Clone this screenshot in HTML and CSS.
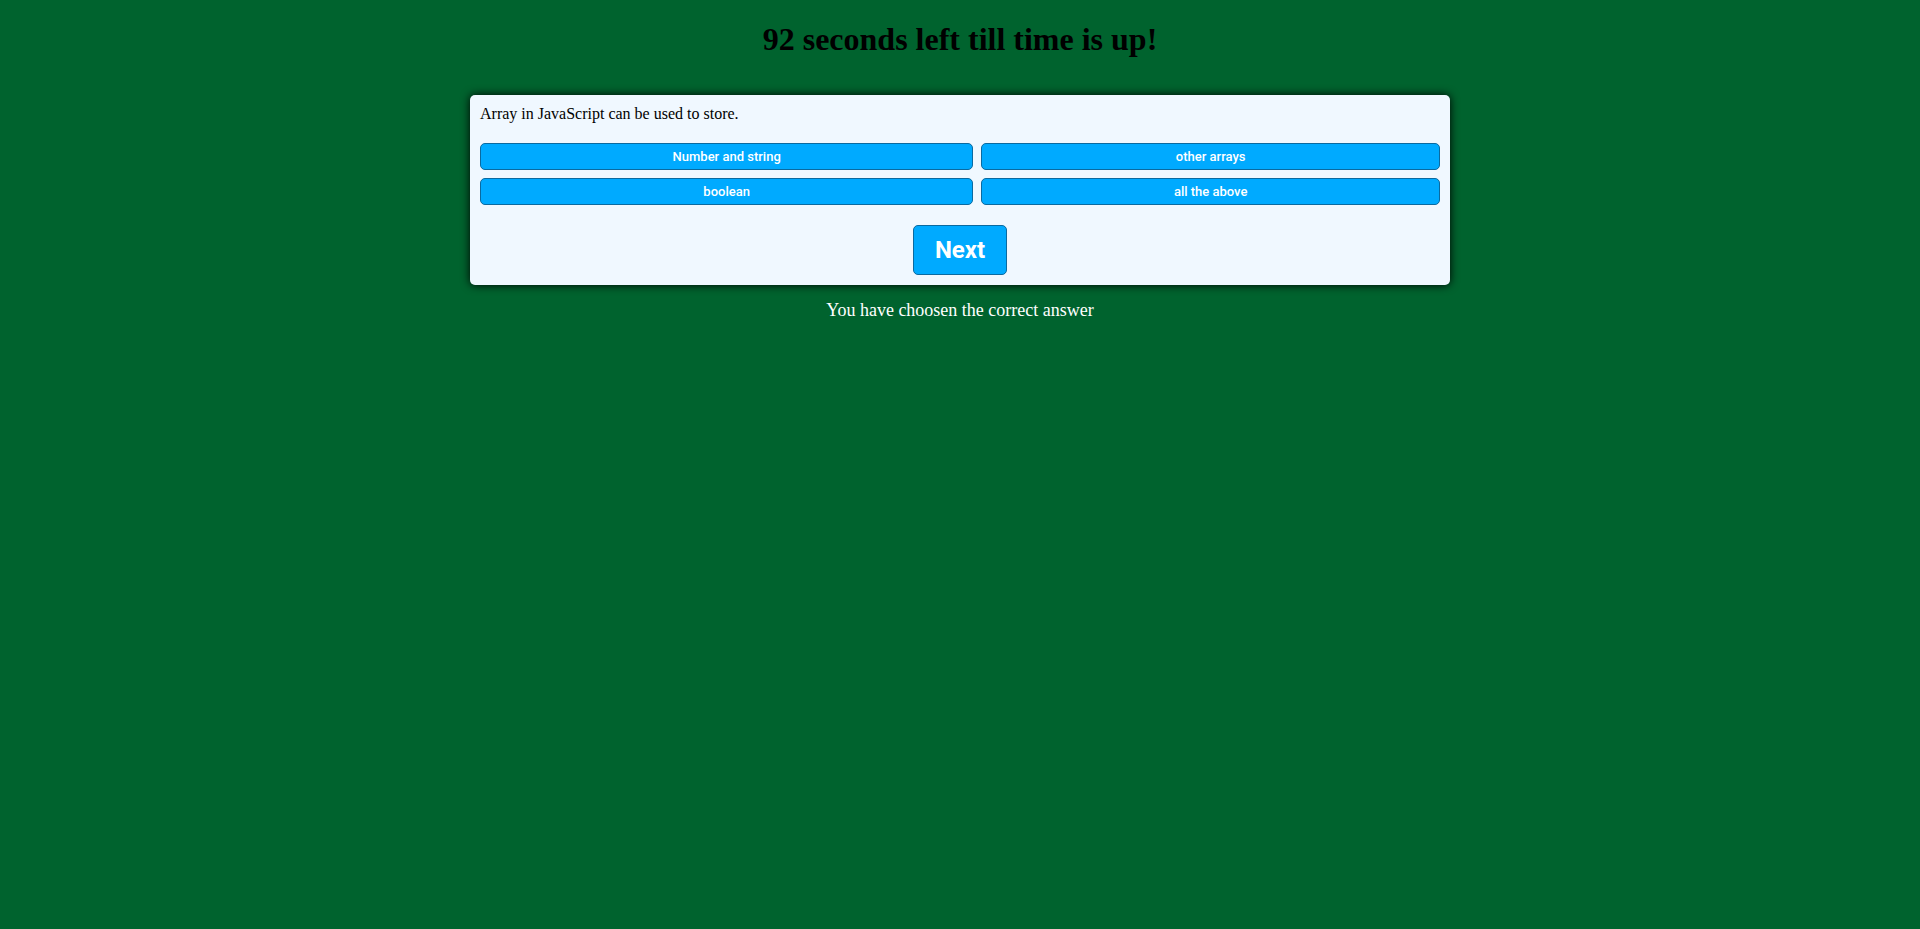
FILE: index.html
```html
<!DOCTYPE html>
<html lang="en">
<head>
<meta charset="utf-8">
<title>Quiz</title>
<link rel="stylesheet" href="styles.css">
</head>
<body>
<h1 class="timer">92 seconds left till time is up!</h1>
<div class="card">
  <p class="question">Array in JavaScript can be used to store.</p>
  <div class="options">
    <button class="option">Number and string</button>
    <button class="option">other arrays</button>
    <button class="option">boolean</button>
    <button class="option">all the above</button>
  </div>
  <div class="actions">
    <button class="next">Next</button>
  </div>
</div>
<p class="feedback">You have choosen the correct answer</p>
</body>
</html>
```
FILE: styles.css
```css
html, body {
  background: #00632e;
}
body {
  margin: 0;
  padding: 0 8px;
  font-family: "Liberation Serif", "Times New Roman", serif;
}
.timer {
  margin: 0 0 37px;
  padding-top: 21px;
  font-size: 32px;
  line-height: 37px;
  font-weight: bold;
  text-align: center;
  color: #000;
}
.card {
  width: 960px;
  margin: 0 auto;
  padding: 10px;
  background: #f0f8ff;
  border-radius: 5px;
  box-shadow: 0 0 10px #000;
}
.question {
  margin: 0 0 20px;
  font-size: 16px;
  line-height: 18px;
  color: #000;
}
.options {
  display: grid;
  grid-template-columns: auto auto;
  gap: 8px;
}
.option {
  font-family: Roboto, "Liberation Sans", Arial, sans-serif;
  font-size: 13px;
  font-weight: 500;
  line-height: 15px;
  padding: 5px 10px;
  color: #fff;
  background: #00aaff;
  border: 1px solid #0b6aa0;
  border-radius: 5px;
}
.actions {
  display: flex;
  justify-content: center;
  margin-top: 20px;
}
.next {
  font-family: Roboto, "Liberation Sans", Arial, sans-serif;
  font-size: 24px;
  font-weight: bold;
  line-height: 28px;
  padding: 10px 21px;
  color: #fff;
  background: #00aaff;
  border: 1px solid #0b6aa0;
  border-radius: 5px;
}
.feedback {
  margin: 15px 0 0;
  text-align: center;
  font-size: 18px;
  line-height: 21px;
  color: #fff;
}
```
